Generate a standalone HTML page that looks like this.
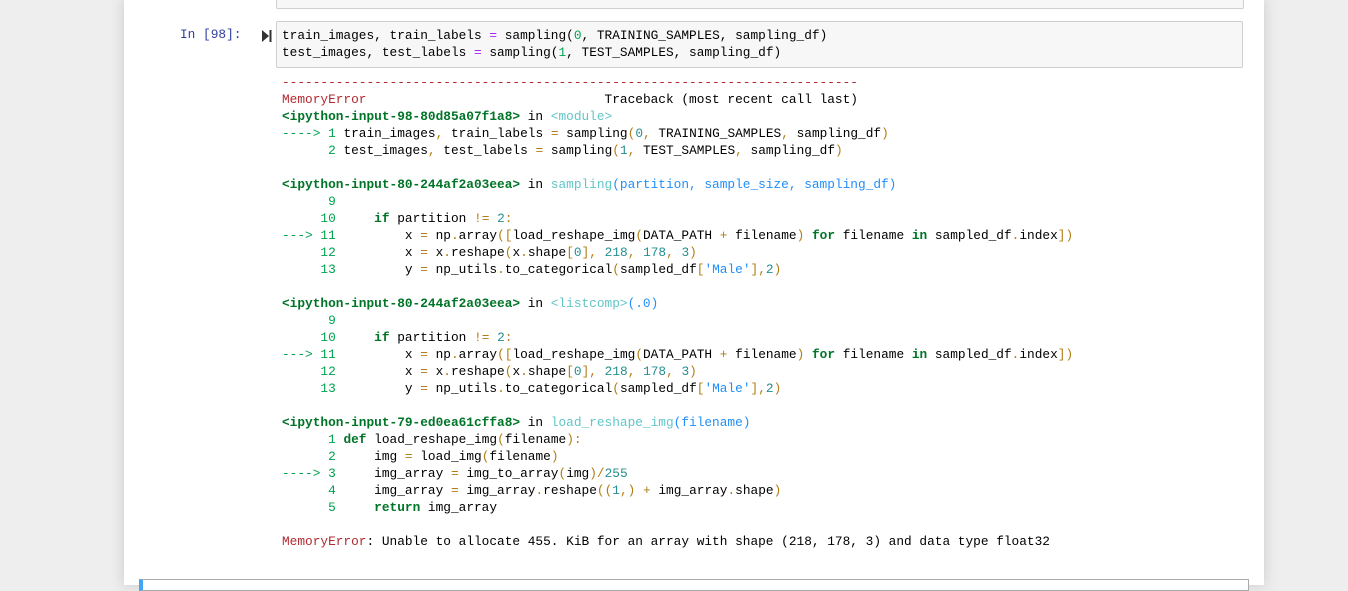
<!DOCTYPE html>
<html><head><meta charset="utf-8"><style>
html,body{margin:0;padding:0;width:1348px;height:585px;overflow:hidden;background:#eeeeee;}
.nb{position:absolute;left:124px;top:0;width:1140px;height:585px;background:#fff;box-shadow:0 0 12px 1px rgba(87,87,87,.2);}
pre{margin:0;font-family:"Liberation Mono",monospace;font-size:12.8px;line-height:17px;color:#000;}
.prev{position:absolute;left:276px;top:-2px;width:966px;height:9px;background:#f7f7f7;border:1px solid #cfcfcf;border-radius:2px;}
.inbox{position:absolute;left:276px;top:21px;width:965px;height:45px;background:#f7f7f7;border:1px solid #cfcfcf;border-radius:2px;}
.inbox pre{position:absolute;left:5px;top:6px;line-height:16.5px;}
.prompt{position:absolute;left:180px;top:27px;font-family:"Liberation Mono",monospace;font-size:12.8px;color:#303f9f;}
.run{position:absolute;left:262px;top:30px;}
.out{position:absolute;left:282px;top:74px;}
.next{position:absolute;left:139px;top:579px;width:1105px;height:10px;border:1px solid #ababab;border-left:4px solid #42a5f5;background:#fff;}
.G{color:#007427;font-weight:bold}.g{color:#00a250}.y{color:#b27d12}.c{color:#60c6c8}.b{color:#208ffb}.t{color:#258f8f}.r{color:#b22b31}.p{color:#aa22ff}.q{color:#208ffb}
</style></head><body>
<div class="nb"></div>
<div class="prev"></div>
<div class="prompt">In [98]:</div>
<svg class="run" width="10" height="12" viewBox="0 0 10 12"><path d="M0 0L7 6L0 12Z" fill="#333"/><rect x="7.5" y="0" width="2" height="12" fill="#333"/></svg>
<div class="inbox"><pre>train_images, train_labels <span class="p">=</span> sampling(<span class="g">0</span>, TRAINING_SAMPLES, sampling_df)
test_images, test_labels <span class="p">=</span> sampling(<span class="g">1</span>, TEST_SAMPLES, sampling_df)</pre></div>
<pre class="out"><span class="r">---------------------------------------------------------------------------</span>
<span class="r">MemoryError</span>                               Traceback (most recent call last)
<span class="G">&lt;ipython-input-98-80d85a07f1a8&gt;</span> in <span class="c">&lt;module&gt;</span>
<span class="g">----&gt; 1</span> train_images<span class="y">,</span> train_labels <span class="y">=</span> sampling<span class="y">(</span><span class="t">0</span><span class="y">,</span> TRAINING_SAMPLES<span class="y">,</span> sampling_df<span class="y">)</span>
<span class="g">      2</span> test_images<span class="y">,</span> test_labels <span class="y">=</span> sampling<span class="y">(</span><span class="t">1</span><span class="y">,</span> TEST_SAMPLES<span class="y">,</span> sampling_df<span class="y">)</span>

<span class="G">&lt;ipython-input-80-244af2a03eea&gt;</span> in <span class="c">sampling</span><span class="b">(partition, sample_size, sampling_df)</span>
<span class="g">      9</span> 
<span class="g">     10</span>     <span class="G">if</span> partition <span class="y">!=</span> <span class="t">2</span><span class="y">:</span>
<span class="g">---&gt; 11</span>         x <span class="y">=</span> np<span class="y">.</span>array<span class="y">([</span>load_reshape_img<span class="y">(</span>DATA_PATH <span class="y">+</span> filename<span class="y">)</span> <span class="G">for</span> filename <span class="G">in</span> sampled_df<span class="y">.</span>index<span class="y">])</span>
<span class="g">     12</span>         x <span class="y">=</span> x<span class="y">.</span>reshape<span class="y">(</span>x<span class="y">.</span>shape<span class="y">[</span><span class="t">0</span><span class="y">],</span> <span class="t">218</span><span class="y">,</span> <span class="t">178</span><span class="y">,</span> <span class="t">3</span><span class="y">)</span>
<span class="g">     13</span>         y <span class="y">=</span> np_utils<span class="y">.</span>to_categorical<span class="y">(</span>sampled_df<span class="y">[</span><span class="q">'Male'</span><span class="y">],</span><span class="t">2</span><span class="y">)</span>

<span class="G">&lt;ipython-input-80-244af2a03eea&gt;</span> in <span class="c">&lt;listcomp&gt;</span><span class="b">(.0)</span>
<span class="g">      9</span> 
<span class="g">     10</span>     <span class="G">if</span> partition <span class="y">!=</span> <span class="t">2</span><span class="y">:</span>
<span class="g">---&gt; 11</span>         x <span class="y">=</span> np<span class="y">.</span>array<span class="y">([</span>load_reshape_img<span class="y">(</span>DATA_PATH <span class="y">+</span> filename<span class="y">)</span> <span class="G">for</span> filename <span class="G">in</span> sampled_df<span class="y">.</span>index<span class="y">])</span>
<span class="g">     12</span>         x <span class="y">=</span> x<span class="y">.</span>reshape<span class="y">(</span>x<span class="y">.</span>shape<span class="y">[</span><span class="t">0</span><span class="y">],</span> <span class="t">218</span><span class="y">,</span> <span class="t">178</span><span class="y">,</span> <span class="t">3</span><span class="y">)</span>
<span class="g">     13</span>         y <span class="y">=</span> np_utils<span class="y">.</span>to_categorical<span class="y">(</span>sampled_df<span class="y">[</span><span class="q">'Male'</span><span class="y">],</span><span class="t">2</span><span class="y">)</span>

<span class="G">&lt;ipython-input-79-ed0ea61cffa8&gt;</span> in <span class="c">load_reshape_img</span><span class="b">(filename)</span>
<span class="g">      1</span> <span class="G">def</span> load_reshape_img<span class="y">(</span>filename<span class="y">):</span>
<span class="g">      2</span>     img <span class="y">=</span> load_img<span class="y">(</span>filename<span class="y">)</span>
<span class="g">----&gt; 3</span>     img_array <span class="y">=</span> img_to_array<span class="y">(</span>img<span class="y">)/</span><span class="t">255</span>
<span class="g">      4</span>     img_array <span class="y">=</span> img_array<span class="y">.</span>reshape<span class="y">((</span><span class="t">1</span><span class="y">,)</span> <span class="y">+</span> img_array<span class="y">.</span>shape<span class="y">)</span>
<span class="g">      5</span>     <span class="G">return</span> img_array

<span class="r">MemoryError</span>: Unable to allocate 455. KiB for an array with shape (218, 178, 3) and data type float32</pre>
<div class="next"></div>
</body></html>
